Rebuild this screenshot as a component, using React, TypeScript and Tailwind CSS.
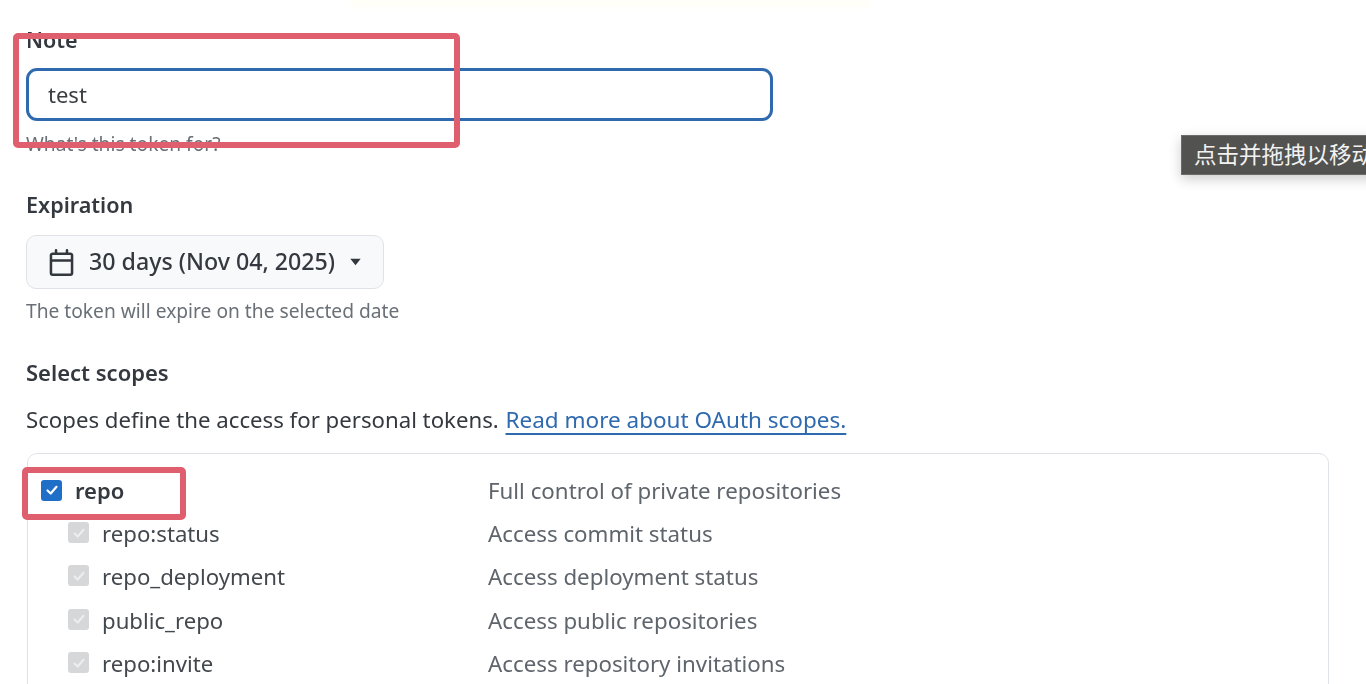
import React from 'react';

const font = { fontFamily: '"Noto Sans", "Noto Sans CJK SC", sans-serif' };

const scopes = [
  { name: 'repo:status', desc: 'Access commit status' },
  { name: 'repo_deployment', desc: 'Access deployment status' },
  { name: 'public_repo', desc: 'Access public repositories' },
  { name: 'repo:invite', desc: 'Access repository invitations' },
];

const Check = ({ className }: { className: string }) => (
  <svg viewBox="0 0 16 16" className={className} fill="none" stroke="currentColor" strokeWidth="2.2" strokeLinecap="round" strokeLinejoin="round">
    <path d="M3.5 8.5 6.7 11.5 12.5 4.8" />
  </svg>
);

export default function App() {
  return (
    <div className="relative h-[684px] w-[1366px] overflow-hidden bg-white text-[#34393f]" style={font}>
      <div className="absolute left-[350px] top-0 h-[6px] w-[520px] bg-[#fffdf3] blur-[3px]" />

      <div className="blur-[0.6px] pl-[26px] pt-[24px]">
        <div className="h-[32px] text-[21.5px] font-semibold leading-[32px]">Note</div>
        <div className="mt-[12px] flex h-[53px] w-[747px] items-center rounded-[11px] border-[3px] border-[#2f69ae] pl-[19px] text-[22px] text-[#3a3d40]">
          test
        </div>
        <div className="mt-[10px] h-[26px] text-[19.2px] leading-[26px] text-[#6a7077]">What's this token for?</div>

        <div className="mt-[32px] h-[32px] text-[21.6px] font-semibold leading-[32px]">Expiration</div>
        <div className="mt-[14px] flex h-[54px] w-[358px] items-center rounded-[10px] border border-[#dfe2e6] bg-[#f8f9fa] pl-[21px]">
          <svg viewBox="0 0 16 16" className="h-[27px] w-[27px] text-[#33383e]" fill="currentColor">
            <path d="M4.75 0a.75.75 0 0 1 .75.75V2h5V.75a.75.75 0 0 1 1.5 0V2h1.25c.966 0 1.75.784 1.75 1.75v10.5A1.75 1.75 0 0 1 13.25 16H2.75A1.75 1.75 0 0 1 1 14.25V3.75C1 2.784 1.784 2 2.75 2H4V.75A.75.75 0 0 1 4.75 0ZM2.5 7.5v6.75c0 .138.112.25.25.25h10.5a.25.25 0 0 0 .25-.25V7.5Zm10.75-4H2.75a.25.25 0 0 0-.25.25V6h11V3.75a.25.25 0 0 0-.25-.25Z" />
          </svg>
          <span className="ml-[14px] text-[23.2px] font-medium leading-none whitespace-nowrap">30 days (Nov 04, 2025)</span>
          <svg viewBox="0 0 12 8" className="ml-[14px] h-[8px] w-[13px] text-[#33383e]" fill="currentColor">
            <path d="M0.8 0.8h10.4L6 7.2Z" />
          </svg>
        </div>
        <div className="mt-[9px] h-[26px] text-[19.2px] leading-[26px] text-[#6a7077]">The token will expire on the selected date</div>

        <div className="mt-[32px] h-[32px] text-[22px] font-semibold leading-[32px]">Select scopes</div>
        <div className="mt-[16px] h-[32px] text-[22.2px] leading-[32px] whitespace-nowrap">
          Scopes define the access for personal tokens.{' '}
          <span className="ml-px text-[22.5px] text-[#2f69ae] underline decoration-[1.5px] underline-offset-[5px]">Read more about OAuth scopes.</span>
        </div>

        <div className="ml-px mt-[17px] h-[300px] w-[1302px] rounded-[10px] border border-[#dfe2e6] pt-[25px]">
          <div className="flex h-[43px] items-start">
            <div className="flex w-[460px] items-center pl-[13px]">
              <div className="flex h-[21px] w-[21px] items-center justify-center rounded-[3px] bg-[#1f6fc9] text-white">
                <Check className="h-[16px] w-[16px]" />
              </div>
              <span className="ml-[13px] text-[22px] font-semibold leading-[22px]">repo</span>
            </div>
            <span className="pt-px text-[22.3px] leading-[22px] text-[#5f656c]">Full control of private repositories</span>
          </div>
          {scopes.map((s) => (
            <div key={s.name} className="flex h-[43.4px] items-start">
              <div className="flex w-[460px] items-start pl-[40px]">
                <div className="flex h-[21px] w-[21px] items-center justify-center rounded-[3px] bg-[#d6d7d8] text-[#eceded]">
                  <Check className="h-[16px] w-[16px]" />
                </div>
                <span className="ml-[13px] pt-px text-[22.2px] leading-[22px] text-[#43484e]">{s.name}</span>
              </div>
              <span className="pt-px text-[22.3px] leading-[22px] text-[#5f656c]">{s.desc}</span>
            </div>
          ))}
        </div>
      </div>

      {/* annotation boxes drawn over the screenshot */}
      <div className="absolute left-[13px] top-[33px] h-[115px] w-[447px] rounded-[5px] border-[6px] border-[#df5f6f] blur-[0.4px]" />
      <div className="absolute left-[22px] top-[467px] h-[53px] w-[164px] rounded-[5px] border-[6px] border-[#df5f6f] blur-[0.4px]" />

      {/* tooltip */}
      <div className="absolute left-[1181px] top-[135px] flex h-[40px] w-[200px] items-center whitespace-nowrap border border-[#6b6b69] bg-[#525250] pb-[3px] pl-[12px] text-[22.5px] text-[#f2f2f2] shadow-[0_4px_12px_rgba(0,0,0,0.2)]" style={{ fontFamily: '"Noto Sans CJK SC", sans-serif' }}>
        点击并拖拽以移动
      </div>
    </div>
  );
}
